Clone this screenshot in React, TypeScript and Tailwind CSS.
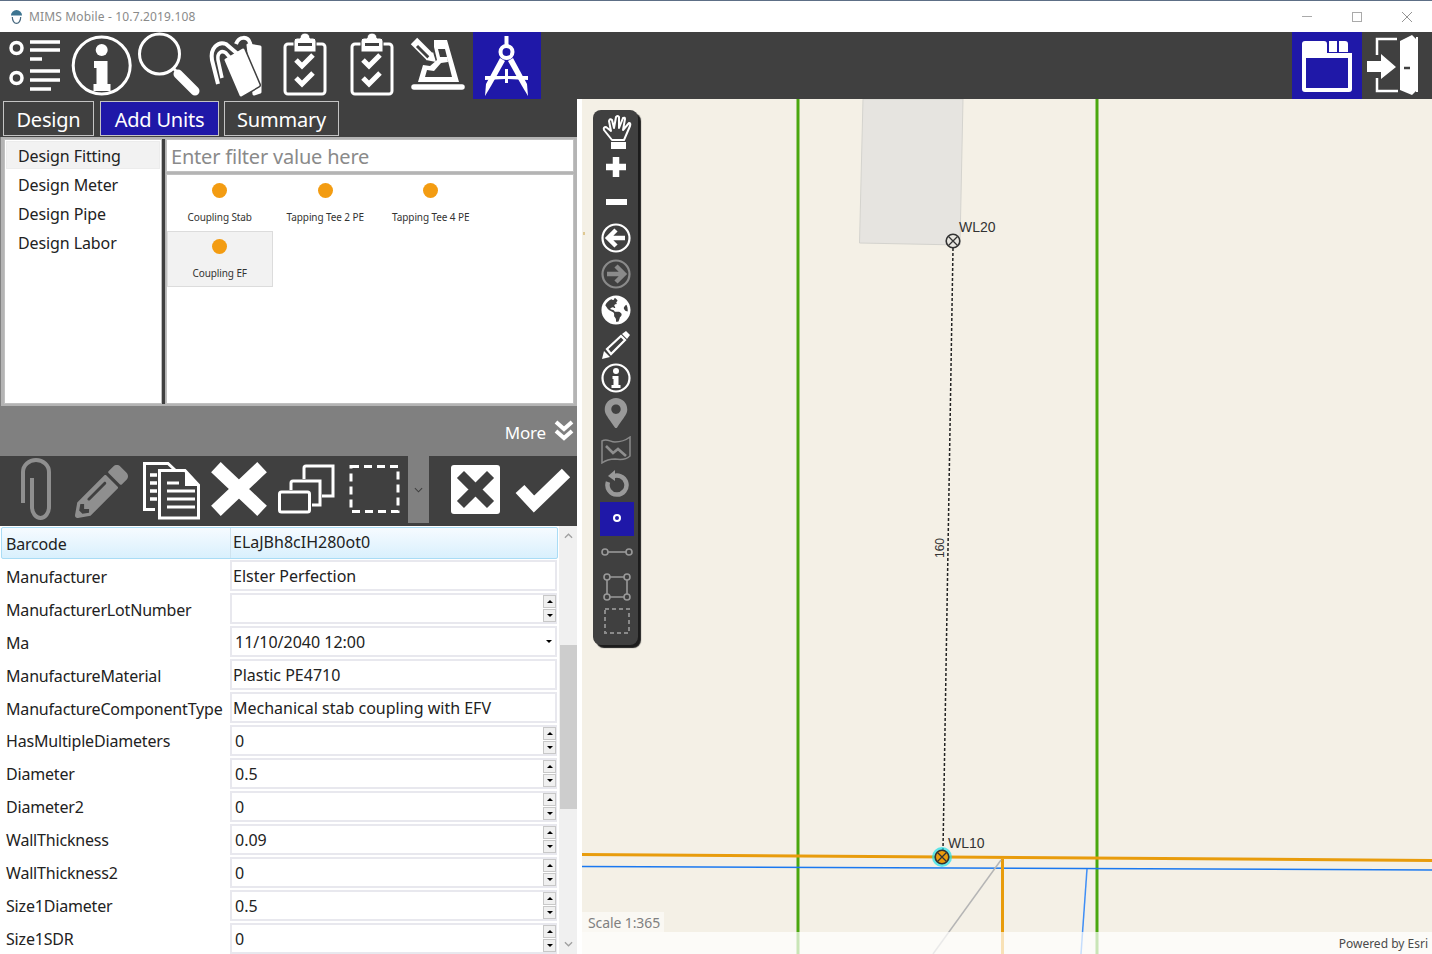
import React from "react";
import { FaGlobeAmericas, FaMapMarkerAlt, FaPencilAlt } from "react-icons/fa";

const Ico = ({ vb, className, children }: { vb: string; className: string; children: React.ReactNode }) => (
  <svg viewBox={vb} className={className} fill="none">{children}</svg>
);

const checks = (x: number) => (
  <g stroke="#fff" strokeWidth={5} fill="none">
    <path d={`M${x - 9} 60 l6 6 l11 -11`} />
    <path d={`M${x - 9} 78 l6 6 l11 -11`} />
  </g>
);

const Clip = ({ x, vb }: { x: number; vb: string }) => (
  <Ico vb={vb} className="w-[67px] h-[67px]">
    <rect x={x - 20} y={44} width={40} height={50} rx={3} stroke="#fff" strokeWidth={3} />
    <path d={`M${x - 11} 52 V41 a3 3 0 0 1 3 -3 h3 a5 5 0 0 1 10 0 h3 a3 3 0 0 1 3 3 V52 Z`} fill="#fff" stroke="#404040" strokeWidth={1} />
    <rect x={x - 7} y={43} width={14} height={3} fill="#404040" />
    {checks(x)}
  </Ico>
);

const Top = () => (
  <div className="h-[67px] flex bg-[#404040] shrink-0 pl-[2px]">
    <Ico vb="2 32 67 67" className="w-[67px] h-[67px]">
      <circle cx={16.5} cy={48} r={5.5} stroke="#fff" strokeWidth={3.5} />
      <circle cx={16.5} cy={78} r={5.5} stroke="#fff" strokeWidth={3.5} />
      <path d="M30 42h30M30 50h30M30 59h12M30 71h30M30 80h30M30 89h21" stroke="#fff" strokeWidth={3.5} />
    </Ico>
    <Ico vb="69 32 67 67" className="w-[67px] h-[67px]">
      <circle cx={101.7} cy={65.5} r={28.5} stroke="#fff" strokeWidth={3} />
      <circle cx={101.7} cy={50} r={6} fill="#fff" />
      <path d="M94 61h13.500v23h3v7h-17v-7h3v-16h-2.500z" fill="#fff" />
    </Ico>
    <Ico vb="136 32 67 67" className="w-[67px] h-[67px]">
      <circle cx={159.5} cy={54} r={20} stroke="#fff" strokeWidth={3} />
      <path d="M174 69l4 4" stroke="#fff" strokeWidth={3} />
      <path d="M178 74l17 17" stroke="#fff" strokeWidth={9} strokeLinecap="round" />
    </Ico>
    <Ico vb="203 32 67 67" className="w-[67px] h-[67px]">
      <path d="M248 45L260 47V92L254 94z" fill="#fff" stroke="#fff" strokeWidth={3} strokeLinejoin="round" />
      <path d="M236 44C239 36 248 36 250 43L258 72" stroke="#fff" strokeWidth={4} />
      <path d="M226 60L243 50L258 85L241 95z" fill="#fff" stroke="#404040" strokeWidth={6} strokeLinejoin="round" />
      <path d="M226 60L243 50L258 85L241 95z" fill="#fff" stroke="#fff" strokeWidth={3} strokeLinejoin="round" />
      <path d="M218 84L212 60C210 48 218 41 226 44L240 56" stroke="#fff" strokeWidth={4} />
      <path d="M222 78L218 60C217 52 222 50 226 53L232 60" stroke="#fff" strokeWidth={3.5} />
    </Ico>
    <Clip x={305} vb="270 32 67 67" />
    <Clip x={372} vb="337 32 67 67" />
    <Ico vb="404 32 67 67" className="w-[67px] h-[67px]">
      <path d="M414 87h48" stroke="#fff" strokeWidth={5.5} strokeLinecap="round" />
      <path fillRule="evenodd" d="M434 40H447L459 82H418L423 65L430 66L437 60L434 47zM438 49L440 57L447 57L448 62L441 63L434 71L427 70L425 77L452 77L445 49z" fill="#fff" />
      <path d="M414 41L430 57" stroke="#fff" strokeWidth={9} />
      <path d="M417 46L431 60" stroke="#404040" strokeWidth={3} />
      <path d="M433 52L436 62L426 60z" fill="#fff" />
    </Ico>
    <div className="w-[68px] h-[67px] ml-[2px] bg-[#1f18a8]">
      <Ico vb="473 32 68 67" className="w-[68px] h-[67px]">
        <path d="M506.500 36v11" stroke="#fff" strokeWidth={4} />
        <circle cx={506.5} cy={52} r={6} stroke="#fff" strokeWidth={4} />
        <path d="M500 58L505 61L491 86L485 96L486 84z" fill="#fff" />
        <path d="M513 58L508 61L522 86L528 96L527 84z" fill="#fff" />
        <path d="M485 76L505 76V69H508V76L528 76V80L508 79V83H505V79L485 80z" fill="#fff" />
      </Ico>
    </div>
    <div className="flex-1" />
    <div className="w-[70px] h-[67px] bg-[#1f18a8]">
      <Ico vb="1292 32 70 67" className="w-[70px] h-[67px]">
        <path d="M1302 44a3 3 0 0 1 3-3h19a3 3 0 0 1 3 3v9h25v36a3 3 0 0 1-3 3h-44a3 3 0 0 1-3-3z" fill="#fff" />
        <rect x={1306} y={58} width={42} height={30} fill="#1f18a8" />
        <path d="M1329 41h8v11h-8zM1339 41h6a3 3 0 0 1 3 3v8h-9z" fill="#fff" />
      </Ico>
    </div>
    <Ico vb="1362 32 70 67" className="w-[70px] h-[67px]">
      <path d="M1397 39h-20v16M1377 78v13h21" stroke="#fff" strokeWidth={2.5} />
      <path d="M1367 61h14v-7l15 13l-15 12v-7h-14z" fill="#fff" />
      <path d="M1400 41l12-6l5 5v50l-5 5l-12-5z" fill="#fff" />
      <path d="M1417 37v55" stroke="#fff" strokeWidth={2} />
      <path d="M1404 68h6" stroke="#404040" strokeWidth={2.5} />
    </Ico>
  </div>
);

const Tab = ({ label, active, w }: { label: string; active?: boolean; w: string }) => (
  <div className={`${w} h-[35px] pt-[2px] border border-[#c4c4c4] flex items-center justify-center text-white text-[20px] tracking-[-0.2px] ${active ? "bg-[#1f18a8]" : "bg-[#404040]"}`}>
    {label}
  </div>
);

const Unit = ({ label, sel }: { label: string; sel?: boolean }) => (
  <div className={`w-[105.5px] h-[56px] flex flex-col items-center ${sel ? "pt-[7px] bg-[#f2f2f2] border border-[#dcdcdc]" : "pt-[8px]"}`}>
    <div className="w-[15px] h-[15px] rounded-full bg-[#f39c12]" />
    <div className="mt-[12px] text-[10px] tracking-[-0.1px] text-[#333] leading-[14px]">{label}</div>
  </div>
);

const Pickers = () => (
  <div className="h-[269px] bg-[#b4b4b4] flex shrink-0 p-[2px] pl-[3px] pr-[3px] border-l border-[#808080]">
    <div className="w-[158px] bg-white border border-[#c0c0c0] p-[1px] text-[16px] tracking-[-0.1px] text-[#222]">
      <div className="h-[28px] bg-[#f2f2f2] border border-[#ececec] pl-[11px] flex items-center pt-[2px]">Design Fitting</div>
      <div className="h-[29px] pl-[12px] flex items-center pt-[2px]">Design Meter</div>
      <div className="h-[29px] pl-[12px] flex items-center pt-[2px]">Design Pipe</div>
      <div className="h-[29px] pl-[12px] flex items-center pt-[2px]">Design Labor</div>
    </div>
    <div className="w-[3px] bg-[#404040]" />
    <div className="flex-1 ml-[1px] flex flex-col gap-[2px]">
      <div className="h-[33px] bg-white border border-[#c0c0c0] pl-[4px] pt-[3px] flex items-center text-[20px] text-[#8a8a8a] tracking-[-0.2px]">Enter filter value here</div>
      <div className="flex-1 bg-white border border-[#c0c0c0] flex flex-wrap content-start">
        <Unit label="Coupling Stab" />
        <Unit label="Tapping Tee 2 PE" />
        <Unit label="Tapping Tee 4 PE" />
        <Unit label="Coupling EF" sel />
      </div>
    </div>
  </div>
);

const More = () => (
  <div className="h-[50px] bg-[#808080] shrink-0 flex items-center justify-end text-white text-[17px] tracking-[-0.2px] pr-[3px] pt-[3px]">
    <span>More</span>
    <Ico vb="0 0 20 24" className="w-[20px] h-[24px] ml-[8px] mb-[4px]">
      <path d="M2 3l8 7l8-7M2 12l8 7l8-7" stroke="#fff" strokeWidth={4} />
    </Ico>
  </div>
);

const Actions = () => (
  <div className="h-[70px] bg-[#404040] shrink-0 flex">
    <Ico vb="0 456 70 70" className="w-[70px] h-[70px]">
      <path d="M32 478V507A8.500 11 0 0 0 49 507V472A13 12 0 0 0 23 472V503" stroke="#8f8f8f" strokeWidth={4} />
    </Ico>
    <div className="w-[68px] h-[70px] flex items-center justify-center pr-[6px]">
      <FaPencilAlt className="w-[53px] h-[53px] text-[#8f8f8f]" />
    </div>
    <Ico vb="138 456 70 70" className="w-[70px] h-[70px]">
      <path d="M155 509.500H144.500V463.500H168L175 470" stroke="#fff" strokeWidth={3} />
      <path d="M150 475h7M150 483h7M150 491h7M150 499h7" stroke="#fff" strokeWidth={3.5} />
      <path d="M159.500 470.500H185L198.500 485V518H159.500z" stroke="#fff" strokeWidth={3} />
      <path d="M185 471V486H198z" fill="#fff" />
      <path d="M167 483h12M167 491h28M167 499h28M167 507h28" stroke="#fff" strokeWidth={3} />
    </Ico>
    <Ico vb="208 456 62 70" className="w-[62px] h-[70px]">
      <path d="M221 472l36 34M257 472l-36 34" stroke="#fff" strokeWidth={14} strokeLinecap="square" />
    </Ico>
    <Ico vb="270 456 72 70" className="w-[72px] h-[70px]">
      <rect x={279.5} y={492} width={30} height={20} rx={2} stroke="#fff" strokeWidth={3} />
      <path d="M291 490v-7a2 2 0 0 1 2-2h27v24h-8" stroke="#fff" strokeWidth={3} />
      <path d="M304 479v-11a2 2 0 0 1 2-2h27v30h-11" stroke="#fff" strokeWidth={3} />
    </Ico>
    <Ico vb="342 456 66 70" className="w-[66px] h-[70px]">
      <rect x={351} y={466.5} width={47} height={45} stroke="#fff" strokeWidth={3} strokeDasharray="8 5" />
    </Ico>
    <div className="w-[21px] h-[67px] bg-[#808080] flex items-center justify-center">
      <Ico vb="0 0 10 6" className="w-[9px] h-[6px]"><path d="M1 1l4 4l4-4" stroke="#404040" strokeWidth={1.2} /></Ico>
    </div>
    <Ico vb="429 456 148 70" className="w-[148px] h-[70px]">
      <rect x={451} y={465} width={49} height={49} rx={3} fill="#fff" />
      <path d="M464 478l23 23M487 478l-23 23" stroke="#404040" strokeWidth={10} strokeLinecap="square" />
      <path d="M520 489l14 15l32-31" stroke="#fff" strokeWidth={12} />
    </Ico>
  </div>
);

type R = { k: string; v: string; t: "text" | "spin" | "date" };
const rows: R[] = [
  { k: "Manufacturer", v: "Elster Perfection", t: "text" },
  { k: "ManufacturerLotNumber", v: "", t: "spin" },
  { k: "Ma", v: "11/10/2040 12:00", t: "date" },
  { k: "ManufactureMaterial", v: "Plastic PE4710", t: "text" },
  { k: "ManufactureComponentType", v: "Mechanical stab coupling with EFV", t: "text" },
  { k: "HasMultipleDiameters", v: "0", t: "spin" },
  { k: "Diameter", v: "0.5", t: "spin" },
  { k: "Diameter2", v: "0", t: "spin" },
  { k: "WallThickness", v: "0.09", t: "spin" },
  { k: "WallThickness2", v: "0", t: "spin" },
  { k: "Size1Diameter", v: "0.5", t: "spin" },
  { k: "Size1SDR", v: "0", t: "spin" },
];

const Spin = ({ up }: { up?: boolean }) => (
  <div className="w-[13px] h-[13px] bg-[#f0f0f0] border border-[#c8c8c8] flex items-center justify-center">
    <div className={`w-0 h-0 border-x-[3px] border-x-transparent ${up ? "border-b-[3px] border-b-black" : "border-t-[3px] border-t-black"}`} />
  </div>
);

const Row = ({ r, low }: { r: R; low: boolean }) => (
  <div className="h-[33px] flex shrink-0 items-center">
    <div className={`w-[230px] pl-[6px] whitespace-nowrap tracking-[-0.18px] ${low ? "pt-[3px]" : "pt-[1px]"}`}>{r.k}</div>
    <div className={`w-[327px] h-[31px] border-2 border-[#e8e8ee] flex items-center ${r.t === "text" ? "pl-[1px]" : "pl-[3px]"}`}>
      <span className="flex-1">{r.v}</span>
      {r.t === "spin" && (
        <div className="flex flex-col gap-[1px] mr-[-1px]">
          <Spin up />
          <Spin />
        </div>
      )}
      {r.t === "date" && <div className="w-0 h-0 mr-[3px] border-x-[3px] border-x-transparent border-t-[3px] border-t-black" />}
    </div>
  </div>
);

const Grid = () => (
  <div className="flex-1 flex min-h-0 bg-white text-[16px] text-[#222] overflow-hidden">
    <div className="w-[559px] flex flex-col pt-[1px]">
      <div className="h-[32px] mx-[1px] shrink-0 flex items-center border border-[#a9dcf5] rounded-[2px] bg-gradient-to-b from-[#f6fbff] to-[#d9f0fd]">
        <div className="w-[228px] pl-[4px] pt-[1px] tracking-[-0.18px]">Barcode</div>
        <div className="flex-1 h-full border-l border-[#cfe3ef] pl-[2px] flex items-center pb-[2px]">ELaJBh8cIH280ot0</div>
      </div>
      {rows.map((r, i) => <Row key={r.k} r={r} low={i < 5} />)}
    </div>
    <div className="w-[18px] bg-[#f0f0f0] flex flex-col items-center relative">
      <Ico vb="0 0 10 6" className="w-[9px] h-[6px] mt-[7px]"><path d="M1 5l4-4l4 4" stroke="#a0a0a0" strokeWidth={1.4} /></Ico>
      <div className="w-[17px] h-[164px] bg-[#cdcdcd] mt-[106px] ml-[1px]" />
      <div className="flex-1" />
      <Ico vb="0 0 10 6" className="w-[9px] h-[6px] mb-[7px]"><path d="M1 1l4 4l4-4" stroke="#a0a0a0" strokeWidth={1.4} /></Ico>
    </div>
  </div>
);

const slots: { mt: string; el: React.ReactNode }[] = [
  {
    mt: "",
    el: (
      <Ico vb="600 113 33 36" className="w-[33px] h-[36px]">
        <path d="M612 139L604 129Q603 126 606 126L611 130L609 120Q610 117 612 119L614 127L616 116Q618 114 619 116L619 127L623 117Q625 116 625 118L623 129L629 122Q631 122 630 125L624 139Z" stroke="#fff" strokeWidth={2} strokeLinejoin="round" />
        <rect x={611} y={141} width={15} height={7} fill="#fff" />
      </Ico>
    ),
  },
  { mt: "mt-[2px]", el: <Ico vb="0 0 22 22" className="w-[22px] h-[22px]"><path d="M11 1v20M1 11h20" stroke="#fff" strokeWidth={6.5} /></Ico> },
  { mt: "mt-[2px]", el: <div className="w-[21px] h-[6px] bg-white" /> },
  {
    mt: "mt-[3px]",
    el: (
      <Ico vb="0 0 32 32" className="w-[32px] h-[32px]">
        <circle cx={16} cy={16} r={13.5} stroke="#fff" strokeWidth={2.2} />
        <path d="M8 16h17M16 8l-8 8l8 8" stroke="#fff" strokeWidth={4.5} />
      </Ico>
    ),
  },
  {
    mt: "mt-[3px]",
    el: (
      <Ico vb="0 0 32 32" className="w-[32px] h-[32px]">
        <circle cx={16} cy={16} r={13.5} stroke="#8a8a8a" strokeWidth={2.2} />
        <path d="M7 16h17M16 8l8 8l-8 8" stroke="#8a8a8a" strokeWidth={4.5} />
      </Ico>
    ),
  },
  { mt: "mt-[3px]", el: <FaGlobeAmericas className="w-[30px] h-[30px] text-white" /> },
  {
    mt: "mt-[2px]",
    el: (
      <Ico vb="0 0 30 30" className="w-[30px] h-[30px]">
        <path d="M6 19L20 6L24 10L10 24z" stroke="#fff" strokeWidth={2.2} />
        <path d="M21 4L25 1L29 5L26 9z" fill="#fff" />
        <path d="M1 29L3 21L9 27z" fill="#fff" />
      </Ico>
    ),
  },
  {
    mt: "",
    el: (
      <Ico vb="0 0 32 32" className="w-[32px] h-[32px]">
        <circle cx={16} cy={16} r={13.5} stroke="#fff" strokeWidth={2.2} />
        <circle cx={16} cy={9} r={3} fill="#fff" />
        <path d="M12.500 14h6v9h2v3h-9v-3h2v-6h-1z" fill="#fff" />
      </Ico>
    ),
  },
  { mt: "mt-[2px]", el: <FaMapMarkerAlt className="w-[26px] h-[30px] text-[#999]" /> },
  {
    mt: "mt-[4px]",
    el: (
      <Ico vb="0 0 30 28" className="w-[30px] h-[28px]">
        <path d="M1 5C6 2 9 6 14 6C20 6 25 4 29 1V20C25 24 20 24 14 23C9 23 5 24 1 27Z" stroke="#8a8a8a" strokeWidth={1.5} />
        <path d="M5 10L12 17L17 13L25 20" stroke="#8f8f8f" strokeWidth={2.6} />
      </Ico>
    ),
  },
  {
    mt: "mt-[1px]",
    el: (
      <Ico vb="0 0 26 28" className="w-[26px] h-[28px]">
        <path d="M9 7a9.500 9.500 0 1 1-4 5" stroke="#999" strokeWidth={4.5} />
        <path d="M12 0v11l-7-5z" fill="#999" />
      </Ico>
    ),
  },
  {
    mt: "mt-[2px]",
    el: (
      <div className="w-[34px] h-[34px] bg-[#1f18a8] flex items-center justify-center ml-[2px]">
        <div className="w-[8px] h-[8px] rounded-full border-2 border-white mb-[2px]" />
      </div>
    ),
  },
  {
    mt: "",
    el: (
      <Ico vb="0 0 32 10" className="w-[32px] h-[10px] ml-[2px]">
        <circle cx={4} cy={5} r={3} stroke="#999" strokeWidth={1.6} />
        <circle cx={28} cy={5} r={3} stroke="#999" strokeWidth={1.6} />
        <path d="M7 5h18" stroke="#999" strokeWidth={1.6} />
      </Ico>
    ),
  },
  {
    mt: "mt-[2px]",
    el: (
      <Ico vb="0 0 28 28" className="w-[28px] h-[28px] ml-[2px]">
        <g stroke="#999" strokeWidth={1.6}>
          <circle cx={4} cy={4} r={3} /><circle cx={24} cy={4} r={3} />
          <circle cx={4} cy={24} r={3} /><circle cx={24} cy={24} r={3} />
          <path d="M7 4h14M7 24h14M4 7v14M24 7v14" />
        </g>
      </Ico>
    ),
  },
  {
    mt: "mt-[1px]",
    el: (
      <Ico vb="0 0 28 28" className="w-[28px] h-[28px] ml-[2px]">
        <rect x={2} y={2} width={24} height={24} stroke="#8a8a8a" strokeWidth={2} strokeDasharray="4 3" />
      </Ico>
    ),
  },
];

const Tools = () => (
  <div className="absolute left-[11px] top-[11px] w-[45px] h-[535px] bg-[#404040] rounded-[8px] shadow-[3px_3px_1px_#1c1c1c] flex flex-col items-center pt-[5.5px] pl-[1px]">
    {slots.map((s, i) => (
      <div key={i} className={`h-[33px] shrink-0 flex items-center justify-center ${s.mt}`}>{s.el}</div>
    ))}
  </div>
);

const Marker = ({ x, y, fill }: { x: number; y: number; fill: string }) => (
  <g>
    <circle cx={x} cy={y} r={6.8} fill={fill} stroke="#333" strokeWidth={1.6} />
    <path d={`M${x - 4.5} ${y - 4.5}l9 9M${x + 4.5} ${y - 4.5}l-9 9`} stroke="#333" strokeWidth={1.3} />
  </g>
);

const MapView = () => (
  <div className="flex-1 relative bg-white pl-[5px] overflow-hidden">
    <div className="relative w-[850px] h-[855px] bg-[#f4f0e6]">
      <svg viewBox="582 99 850 855" className="w-[850px] h-[855px]" fill="none">
        <path d="M863 99H963L960 245L859.500 243z" fill="#e6e4e0" stroke="#d4d3ce" />
        <path d="M798 99V954M1097 99V954" stroke="#4aa70e" strokeWidth={3} />
        <path d="M582 854.500L1432 860.500" stroke="#e89c0c" strokeWidth={3} />
        <path d="M582 866.500L1432 870" stroke="#1a78f0" strokeWidth={1.5} />
        <path d="M1002.500 859V954" stroke="#e89c0c" strokeWidth={3} />
        <path d="M1087 869L1081 954" stroke="#3f8ef5" strokeWidth={1.5} />
        <path d="M1001 860L933 954" stroke="#b5b5b5" strokeWidth={1.5} />
        <path d="M953 248L943 850" stroke="#222" strokeWidth={1.5} strokeDasharray="3 2" />
        <path d="M584 232v3" stroke="#c9a040" strokeWidth={1} />
        <Marker x={953} y={241} fill="#e8e6e0" />
        <circle cx={942} cy={857} r={10} fill="#1fe0e8" opacity={0.7} />
        <Marker x={942} y={857} fill="#ec9c0c" />
        <text x={959} y={232} fontSize={14} fill="#333" fontFamily="Liberation Sans">WL20</text>
        <text x={948} y={848} fontSize={14} fill="#333" fontFamily="Liberation Sans">WL10</text>
        <text x={0} y={0} fontSize={12} fill="#333" fontFamily="Liberation Sans" transform="translate(944 558) rotate(-90)">160</text>
      </svg>
      <Tools />
      <div className="absolute left-0 bottom-0 w-full h-[22px] bg-[#ffffff]/70 flex items-center justify-end pr-[4px] pt-[2px] text-[12px] text-[#4a4a4a]">Powered by Esri</div>
      <div className="absolute left-0 bottom-[22px] w-[82px] h-[20px] bg-[#ffffff]/50 flex items-center pl-[6px] text-[14px] tracking-[-0.1px] text-[#808080]">Scale 1:365</div>
    </div>
  </div>
);

export default function App() {
  return (
    <div className="w-[1432px] h-[954px] flex flex-col overflow-hidden bg-white font-['Noto_Sans',sans-serif]">
      <div className="h-[32px] shrink-0 bg-white border-t border-[#5d6f86] flex items-center pl-[10px] text-[12px] tracking-[0.15px] text-[#8a8a8a]">
        <Ico vb="0 0 14 18" className="w-[13px] h-[17px] mr-[6px]">
          <path d="M1 8a6 6 0 0 1 12 0z" fill="#3d7591" />
          <path d="M2.500 9.500c0 4 2 7 4.500 7s4.500-3 4.500-7" stroke="#4a6a80" strokeWidth={1.3} />
        </Ico>
        <span>MIMS Mobile - 10.7.2019.108</span>
        <div className="flex-1" />
        <div className="w-[50px] flex justify-center"><div className="w-[10px] h-px bg-[#aaa]" /></div>
        <div className="w-[50px] flex justify-center"><div className="w-[10px] h-[10px] border border-[#aaa]" /></div>
        <Ico vb="0 0 10 10" className="w-[10px] h-[10px] mr-[20px] ml-[20px]"><path d="M0 0l10 10M10 0l-10 10" stroke="#888" strokeWidth={0.9} /></Ico>
      </div>
      <Top />
      <div className="flex-1 flex min-h-0">
        <div className="w-[577px] shrink-0 flex flex-col">
          <div className="h-[38px] bg-[#404040] shrink-0 flex gap-[6px] pl-[3px] pt-[2px]">
            <Tab label="Design" w="w-[91px]" />
            <Tab label="Add Units" active w="w-[119px]" />
            <Tab label="Summary" w="w-[115px] ml-[-1px]" />
          </div>
          <Pickers />
          <More />
          <Actions />
          <Grid />
        </div>
        <MapView />
      </div>
    </div>
  );
}
